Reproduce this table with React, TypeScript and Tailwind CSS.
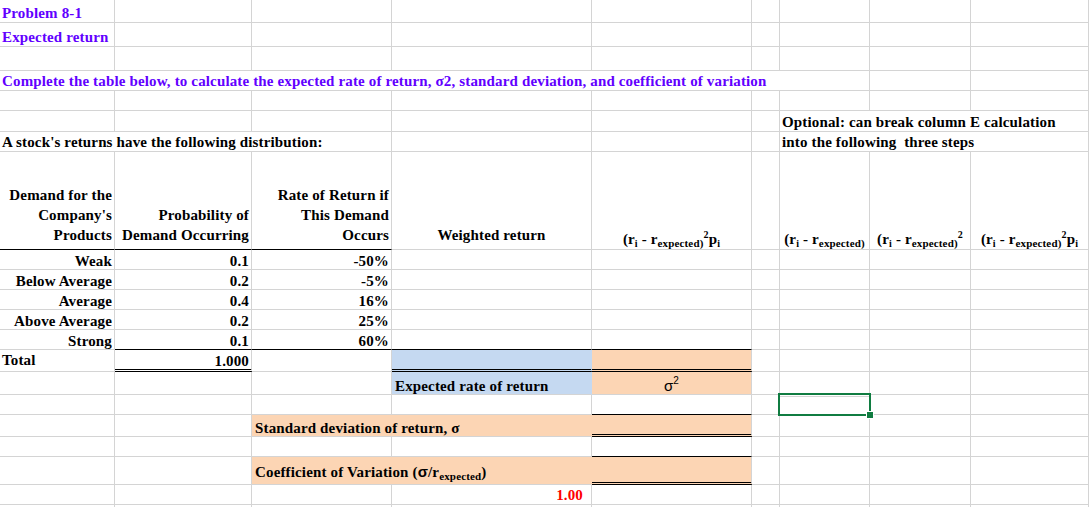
import type { ReactNode } from "react";

// Column widths (A..I) and a few merged spans where text overflows in the sheet
const A = "w-[115px]";
const B = "w-[137px]";
const C = "w-[140px]";
const D = "w-[200px]";
const E = "w-[160px]";
const F = "w-[28px]";
const G = "w-[90px]";
const H = "w-[101px]";
const I = "w-[118px]";

const base =
  "shrink-0 flex items-end overflow-hidden whitespace-nowrap border-r border-b border-[#d4d4d4] px-[2px] leading-[16px]";

function Cell({ w, className = "pb-[1px]", children }: { w: string; className?: string; children?: ReactNode }) {
  return <div className={`${base} ${w} ${className}`}>{children}</div>;
}

function Row({ h, children }: { h: string; children: ReactNode }) {
  return <div className={`flex ${h}`}>{children}</div>;
}

function Dev({ sq, p }: { sq?: boolean; p?: boolean }) {
  return (
    <span>
      (r<sub className="text-[10px]">i</sub> - r<sub className="text-[11px]">expected)</sub>
      {sq && <sup className="text-[10px] -top-[6px]">2</sup>}
      {p && (
        <>
          p<sub className="text-[10px]">i</sub>
        </>
      )}
    </span>
  );
}

const rows = [
  ["Weak", "0.1", "-50%"],
  ["Below Average", "0.2", "-5%"],
  ["Average", "0.4", "16%"],
  ["Above Average", "0.2", "25%"],
  ["Strong", "0.1", "60%"],
];

export default function App() {
  return (
    <div className="w-[1089px] h-[507px] overflow-hidden bg-white font-['Liberation_Serif',serif] text-[15px] tracking-[0.15px] font-bold text-black">
      <Row h="h-[23px]">
        <Cell w={A}>
          <span className="text-[#6200ff]">Problem 8-1</span>
        </Cell>
        <Cell w={B} /><Cell w={C} /><Cell w={D} /><Cell w={E} /><Cell w={F} /><Cell w={G} /><Cell w={H} /><Cell w={I} />
      </Row>
      <Row h="h-[24px]">
        <Cell w={A}>
          <span className="text-[#6200ff]">Expected return</span>
        </Cell>
        <Cell w={B} /><Cell w={C} /><Cell w={D} /><Cell w={E} /><Cell w={F} /><Cell w={G} /><Cell w={H} /><Cell w={I} />
      </Row>
      <Row h="h-[24px]">
        <Cell w={A} /><Cell w={B} /><Cell w={C} /><Cell w={D} /><Cell w={E} /><Cell w={F} /><Cell w={G} /><Cell w={H} /><Cell w={I} />
      </Row>
      <Row h="h-[20px]">
        <Cell w="w-[870px]">
          <span className="text-[#6200ff]">
            Complete the table below, to calculate the expected rate of return, σ2, standard deviation, and coefficient of variation
          </span>
        </Cell>
        <Cell w={H} /><Cell w={I} />
      </Row>
      <Row h="h-[20px]">
        <Cell w={A} /><Cell w={B} /><Cell w={C} /><Cell w={D} /><Cell w={E} /><Cell w={F} /><Cell w={G} /><Cell w={H} /><Cell w={I} />
      </Row>
      <Row h="h-[21px]">
        <Cell w={A} /><Cell w={B} /><Cell w={C} /><Cell w={D} /><Cell w={E} /><Cell w={F} />
        <Cell w="w-[309px]">Optional: can break column E calculation</Cell>
      </Row>
      <Row h="h-[20px]">
        <Cell w="w-[392px]">A stock's returns have the following distribution:</Cell>
        <Cell w={D} /><Cell w={E} /><Cell w={F} />
        <Cell w="w-[309px]">into the following{"\u00a0"} three steps</Cell>
      </Row>

      {/* header row */}
      <Row h="h-[98px]">
        <Cell w={A} className="flex-col justify-end items-end leading-[20px] pb-[4px] border-b-black">
          <div>Demand for the</div>
          <div>Company's</div>
          <div>Products</div>
        </Cell>
        <Cell w={B} className="flex-col justify-end items-end leading-[20px] pb-[4px] border-b-black">
          <div>Probability of</div>
          <div>Demand Occurring</div>
        </Cell>
        <Cell w={C} className="flex-col justify-end items-end leading-[20px] pb-[4px] border-b-black">
          <div>Rate of Return if</div>
          <div>This Demand</div>
          <div>Occurs</div>
        </Cell>
        <Cell w={D} className="justify-center leading-[20px] pb-[4px]">Weighted return</Cell>
        <Cell w={E} className="justify-center pb-[2px]">
          <Dev sq p />
        </Cell>
        <Cell w={F} />
        <Cell w={G} className="justify-center pb-[2px]">
          <Dev />
        </Cell>
        <Cell w={H} className="justify-center pb-[2px]">
          <Dev sq />
        </Cell>
        <Cell w={I} className="justify-center pb-[2px]">
          <Dev sq p />
        </Cell>
      </Row>

      {rows.map(([name, prob, ret], i) => {
        const last = i === rows.length - 1;
        return (
          <Row key={name} h="h-[20px]">
            <Cell w={A} className="justify-end">{name}</Cell>
            <Cell w={B} className={last ? "justify-end border-b-black" : "justify-end"}>{prob}</Cell>
            <Cell w={C} className={last ? "justify-end border-b-black" : "justify-end"}>{ret}</Cell>
            <Cell w={D} className={last ? "border-b-black" : ""} />
            <Cell w={E} className={last ? "border-b-black" : ""} />
            <Cell w={F} /><Cell w={G} /><Cell w={H} /><Cell w={I} />
          </Row>
        );
      })}

      {/* Total */}
      <Row h="h-[22px]">
        <Cell w={A} className="pb-[3px]">Total</Cell>
        <Cell w={B} className="justify-end border-b-[3px] border-double border-b-black">1.000</Cell>
        <Cell w={C} />
        <Cell w={D} className="bg-[#c5d9f1] border-r-[#c5d9f1] border-b-[3px] border-double border-b-black" />
        <Cell w={E} className="bg-[#fcd5b4] border-b-[3px] border-double border-b-black" />
        <Cell w={F} /><Cell w={G} /><Cell w={H} /><Cell w={I} />
      </Row>
      <Row h="h-[23px]">
        <Cell w={A} /><Cell w={B} /><Cell w={C} />
        <Cell w={D} className="bg-[#c5d9f1] border-r-[#c5d9f1] pb-0 pl-[3px]">Expected rate of return</Cell>
        <Cell w={E} className="bg-[#fcd5b4] justify-center pb-0 font-['Liberation_Sans',sans-serif] font-normal">
          <span>
            σ<sup className="text-[10px] -top-[7px]">2</sup>
          </span>
        </Cell>
        <Cell w={F} /><Cell w={G} /><Cell w={H} /><Cell w={I} />
      </Row>
      <Row h="h-[20px]">
        <Cell w={A} /><Cell w={B} /><Cell w={C} /><Cell w={D} />
        <Cell w={E} className="border-b-black" />
        <Cell w={F} />
        <div className="relative shrink-0">
          <Cell w={G} />
          <div className="absolute -left-[2px] -top-[2px] -right-[1px] -bottom-[1px] border-2 border-[#107c41]" />
          <div className="absolute -right-[3px] -bottom-[3px] h-[6px] w-[6px] bg-[#107c41] outline outline-1 outline-white" />
        </div>
        <Cell w={H} /><Cell w={I} />
      </Row>
      <Row h="h-[22px]">
        <Cell w={A} /><Cell w={B} />
        <Cell w="w-[340px]" className="bg-[#fcd5b4] border-r-[#fcd5b4] pb-0 pl-[3px]">
          Standard deviation of return, σ
        </Cell>
        <Cell w={E} className="bg-[#fcd5b4] border-b-[3px] border-double border-b-black" />
        <Cell w={F} /><Cell w={G} /><Cell w={H} /><Cell w={I} />
      </Row>
      <Row h="h-[20px]">
        <Cell w={A} /><Cell w={B} /><Cell w={C} /><Cell w={D} />
        <Cell w={E} className="border-b-black" />
        <Cell w={F} /><Cell w={G} /><Cell w={H} /><Cell w={I} />
      </Row>
      <Row h="h-[28px]">
        <Cell w={A} /><Cell w={B} />
        <Cell w="w-[340px]" className="bg-[#fcd5b4] border-r-[#fcd5b4] pb-[4px] pl-[3px]">
          <span>
            Coefficient of Variation (<span className="font-['Liberation_Sans',sans-serif]">σ</span>/r
            <sub className="text-[11px] font-bold">expected</sub>)
          </span>
        </Cell>
        <Cell w={E} className="bg-[#fcd5b4] border-b-[3px] border-double border-b-black" />
        <Cell w={F} /><Cell w={G} /><Cell w={H} /><Cell w={I} />
      </Row>
      <Row h="h-[20px]">
        <Cell w={A} /><Cell w={B} /><Cell w={C} />
        <Cell w={D} className="justify-end pr-[8px] pb-[1px] text-[#ff0000]">1.00</Cell>
        <Cell w={E} /><Cell w={F} /><Cell w={G} /><Cell w={H} /><Cell w={I} />
      </Row>
      <Row h="h-[20px]">
        <Cell w={A} /><Cell w={B} /><Cell w={C} /><Cell w={D} /><Cell w={E} /><Cell w={F} /><Cell w={G} /><Cell w={H} /><Cell w={I} />
      </Row>
    </div>
  );
}
